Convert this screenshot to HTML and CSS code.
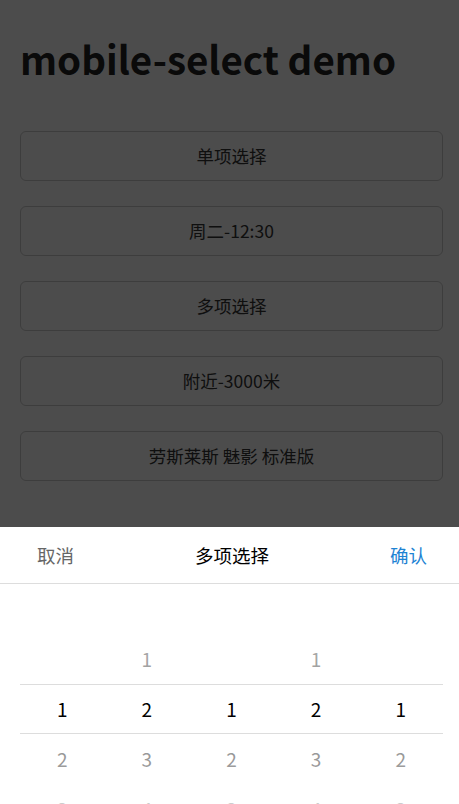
FILE: index.html
```html
<!DOCTYPE html>
<html lang="zh-CN">
<head>
  <meta charset="UTF-8">
  <meta name="viewport" content="width=device-width, initial-scale=1.0">
  <title>mobile-select demo</title>
  <link rel="stylesheet" href="styles.css">
</head>
<body>
  <h1 class="title">mobile-select demo</h1>
  <div class="trigger">单项选择</div>
  <div class="trigger">周二-12:30</div>
  <div class="trigger">多项选择</div>
  <div class="trigger">附近-3000米</div>
  <div class="trigger">劳斯莱斯 魅影 标准版</div>

  <div class="mask"></div>

  <div class="picker">
    <div class="picker-bar">
      <div class="btn-cancel">取消</div>
      <div class="picker-title">多项选择</div>
      <div class="btn-ensure">确认</div>
    </div>
    <div class="panel">
      <div class="wheels">
        <ul class="wheel at-0">
          <li class="cur">1</li><li>2</li><li>3</li>
        </ul>
        <ul class="wheel at-1">
          <li>1</li><li class="cur">2</li><li>3</li><li>4</li>
        </ul>
        <ul class="wheel at-0">
          <li class="cur">1</li><li>2</li><li>3</li>
        </ul>
        <ul class="wheel at-1">
          <li>1</li><li class="cur">2</li><li>3</li><li>4</li>
        </ul>
        <ul class="wheel at-0">
          <li class="cur">1</li><li>2</li><li>3</li>
        </ul>
      </div>
      <div class="select-line"></div>
      <div class="shadow-mask"></div>
    </div>
  </div>
</body>
</html>
```

FILE: styles.css
```css
body { margin: 0; padding: 20px 16px 20px 20px; background: #fff; color: #333; font-family: "Noto Sans CJK SC", "Noto Sans", sans-serif; }
.title { font-size: 38.5px; font-weight: bold; color: #222; margin: 14px 0 49px; line-height: 48px; }
.trigger { height: 48px; line-height: 48px; border: 1px solid #ccc; border-radius: 6px; text-align: center; font-size: 17.5px; margin-bottom: 25px; }

.mask { position: fixed; inset: 0; background: rgba(0,0,0,0.7); }

.picker { position: fixed; left: 0; right: 0; bottom: 0; height: 277px; background: #fff; overflow: hidden; }
.picker-bar { height: 56px; border-bottom: 1px solid #ddd; display: flex; align-items: center; justify-content: space-between; padding: 0 32px 0 37px; font-size: 18.5px; }
.btn-cancel { color: #666; }
.picker-title { color: #000; }
.btn-ensure { color: #1e83d3; }

.panel { position: relative; height: 250px; margin: 0 16px 0 20px; }
.wheels { display: flex; height: 100%; }
.wheel { flex: 1; list-style: none; margin: 0; padding: 0; text-align: center; font-size: 19px; color: #999; }
.wheel li { height: 50px; line-height: 50px; }
.wheel li.cur { color: #000; }
.wheel.at-0 { padding-top: 100px; }
.wheel.at-1 { padding-top: 50px; }
.select-line { position: absolute; left: 0; right: 0; top: 100px; height: 48px; border-top: 1px solid #ddd; border-bottom: 1px solid #ddd; pointer-events: none; }
.shadow-mask { position: absolute; inset: 0; pointer-events: none;
  background: linear-gradient(to bottom, rgba(255,255,255,.5), rgba(255,255,255,0) 40%, rgba(255,255,255,0) 72%, rgba(255,255,255,.9)); }
```
